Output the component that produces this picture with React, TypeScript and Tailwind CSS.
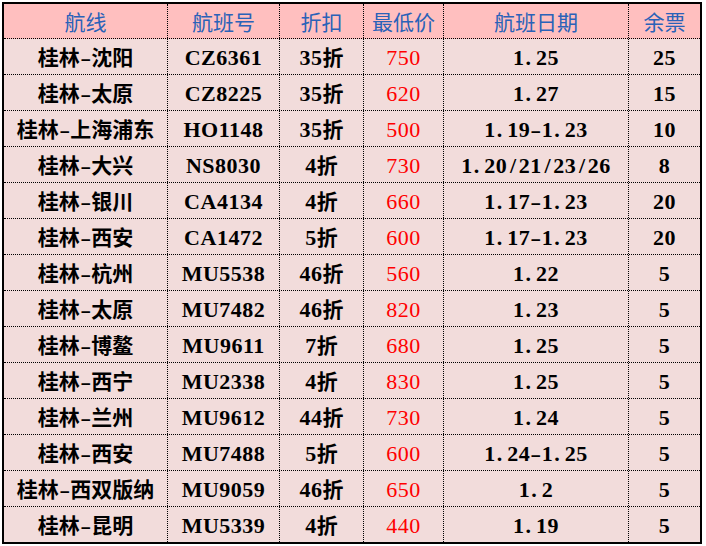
import React from "react";

type Row = [string, string, string, string, string, string];

const rows: Row[] = [
  ["桂林-沈阳", "CZ6361", "35折", "750", "1.25", "25"],
  ["桂林-太原", "CZ8225", "35折", "620", "1.27", "15"],
  ["桂林-上海浦东", "HO1148", "35折", "500", "1.19-1.23", "10"],
  ["桂林-大兴", "NS8030", "4折", "730", "1.20/21/23/26", "8"],
  ["桂林-银川", "CA4134", "4折", "660", "1.17-1.23", "20"],
  ["桂林-西安", "CA1472", "5折", "600", "1.17-1.23", "20"],
  ["桂林-杭州", "MU5538", "46折", "560", "1.22", "5"],
  ["桂林-太原", "MU7482", "46折", "820", "1.23", "5"],
  ["桂林-博鳌", "MU9611", "7折", "680", "1.25", "5"],
  ["桂林-西宁", "MU2338", "4折", "830", "1.25", "5"],
  ["桂林-兰州", "MU9612", "44折", "730", "1.24", "5"],
  ["桂林-西安", "MU7488", "5折", "600", "1.24-1.25", "5"],
  ["桂林-西双版纳", "MU9059", "46折", "650", "1.2", "5"],
  ["桂林-昆明", "MU5339", "4折", "440", "1.19", "5"],
];

const headers = ["航线", "航班号", "折扣", "最低价", "航班日期", "余票"];

function Latin({ text }: { text: string }) {
  const parts = text.match(/[.\-/]|[^.\-/]+/g) || [];
  return (
    <span className="relative top-[1px] font-['Liberation_Serif',serif] text-[22px] tracking-[0.5px]">
      {parts.map((p, i) =>
        p === "." ? (
          <span key={i} className="inline-block w-[11.5px] text-left pl-[1px] tracking-normal">
            {p}
          </span>
        ) : p === "-" ? (
          <span key={i} className="inline-block w-[11.5px] text-center tracking-normal scale-x-[1.5]">
            {p}
          </span>
        ) : p === "/" ? (
          <span key={i} className="inline-block w-[11.5px] text-center tracking-normal">
            {p}
          </span>
        ) : (
          <React.Fragment key={i}>{p}</React.Fragment>
        )
      )}
    </span>
  );
}

function Mixed({ text }: { text: string }) {
  const parts = text.match(/[\x00-\x7F]+|[^\x00-\x7F]+/g) || [];
  return (
    <>
      {parts.map((p, i) =>
        /^[\x00-\x7F]+$/.test(p) ? (
          <Latin key={i} text={p} />
        ) : (
          <span key={i} className="font-['Noto_Sans_CJK_SC',sans-serif] text-[21px]">
            {p}
          </span>
        )
      )}
    </>
  );
}

const widths = ["w-[164px]", "w-[112px]", "w-[84px]", "w-[80px]", "w-[185px]", "w-[71px]"];

export default function App() {
  return (
    <div className="w-[706px] h-[546px] bg-white pt-[2px] pl-[2px]">
      <div className="w-[700px] border-2 border-black flex flex-col">
        <div className="flex h-[35px] bg-[#ffbfbf] border-b border-dotted border-black">
          {headers.map((h, i) => (
            <div
              key={i}
              className={`${widths[i]} flex items-center justify-center text-[#2a62b8] font-['Noto_Sans_CJK_SC',sans-serif] text-[21px] leading-none ${
                i < 5 ? "border-r border-dotted border-black" : ""
              }`}
            >
              {h}
            </div>
          ))}
        </div>
        {rows.map((r, ri) => (
          <div
            key={ri}
            className={`flex bg-[#f2dcdb] ${
              ri < rows.length - 1 ? "h-[36px] border-b border-dotted border-black" : "h-[35px]"
            }`}
          >
            {r.map((c, ci) => (
              <div
                key={ci}
                className={`${widths[ci]} flex items-center justify-center leading-none whitespace-nowrap ${
                  ci === 3 ? "text-[#ff0000] font-normal" : "text-black font-bold"
                } ${ci < 5 ? "border-r border-dotted border-black" : ""}`}
              >
                <Mixed text={c} />
              </div>
            ))}
          </div>
        ))}
      </div>
    </div>
  );
}
